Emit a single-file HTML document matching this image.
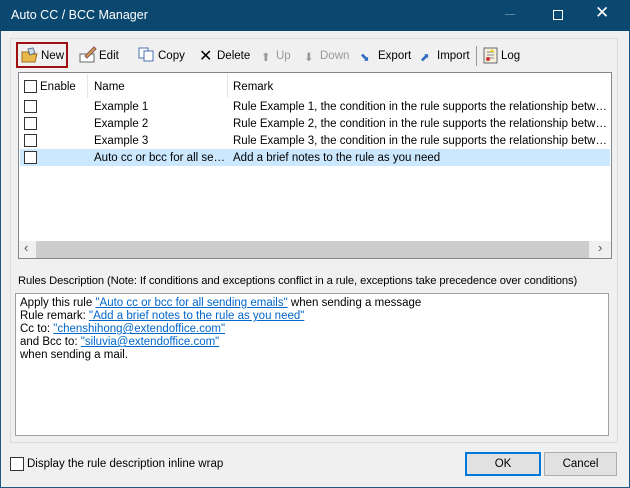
<!DOCTYPE html><html><head><style>
*{box-sizing:border-box}body{margin:0;width:630px;height:488px;overflow:hidden;background:#f0f0f0;font-family:"Liberation Sans",sans-serif;font-size:11.5px;color:#000;position:relative;white-space:nowrap}
.a{position:absolute}
a{color:#0066cc;text-decoration:underline}
.cb{position:absolute;width:13px;height:13px;border:1px solid #333;background:#fff}
.tb{position:absolute;top:50px;font-size:11.5px}
.row{position:absolute;left:20px;width:590px;height:17px;line-height:18px}
.rm{position:absolute;left:213px;width:374px;overflow:hidden;text-overflow:ellipsis}
</style></head><body>
<div class="a" style="left:0;top:0;width:630px;height:488px;border:1px solid #1c5a85;border-top:none"></div>
<div class="a" style="left:0;top:0;width:630px;height:31px;background:#0b4870;color:#fff;font-size:12.5px;line-height:31px;padding-left:11px">Auto CC / BCC Manager</div>
<div class="a" style="left:505px;top:14px;width:10px;height:1px;background:#5a86a6"></div>
<div class="a" style="left:553px;top:10px;width:10px;height:10px;border:1px solid #fff"></div>
<div class="a" style="left:595px;top:3px;color:#fff;font-size:17px">✕</div>
<div class="a" style="left:10px;top:38px;width:608px;height:405px;border:1px solid #dcdcdc;background:#f0f0f0"></div>
<div class="a" style="left:16px;top:42px;width:52px;height:26px;border:2px solid #a01010"></div>
<svg class="a" style="left:21px;top:47px" width="18" height="16"><path d="M1 5h6l1 2h8l-2 8H1z" fill="#e9b84a" stroke="#a07020"/><path d="M7 2l5-1 2 5-5 2z" fill="#cde" stroke="#678"/></svg>
<div class="tb" style="left:41px">New</div>
<svg class="a" style="left:79px;top:46px" width="18" height="17"><rect x="1" y="8" width="14" height="8" fill="#fff" stroke="#666"/><path d="M6 10L15 1l2 2-9 9z" fill="#d8a050" stroke="#855"/></svg>
<div class="tb" style="left:99px">Edit</div>
<svg class="a" style="left:138px;top:47px" width="16" height="15"><rect x="1" y="1" width="9" height="10" fill="#fff" stroke="#4a70b0"/><rect x="6" y="4" width="9" height="10" fill="#fff" stroke="#4a70b0"/></svg>
<div class="tb" style="left:158px">Copy</div>
<div class="a" style="left:199px;top:46px;font-size:16px">✕</div>
<div class="tb" style="left:217px">Delete</div>
<div class="tb" style="left:261px;color:#999">⬆</div><div class="tb" style="left:276px;color:#999">Up</div>
<div class="tb" style="left:304px;color:#999">⬇</div><div class="tb" style="left:320px;color:#999">Down</div>
<div class="tb" style="left:360px;color:#2d6cc0">⬊</div><div class="tb" style="left:378px">Export</div>
<div class="tb" style="left:420px;color:#2d6cc0">⬈</div><div class="tb" style="left:437px">Import</div>
<div class="a" style="left:476px;top:46px;width:1px;height:20px;background:#999"></div>
<svg class="a" style="left:483px;top:47px" width="16" height="17"><rect x="1" y="1" width="13" height="15" fill="#f4f0d8" stroke="#667"/><path d="M4 5h7M4 8h7M4 11h7" stroke="#889"/><circle cx="5" cy="12" r="2" fill="#c33"/><path d="M9 2l2 3H7z" fill="#ec0"/></svg>
<div class="tb" style="left:501px">Log</div>
<div class="a" style="left:18px;top:72px;width:594px;height:187px;border:1px solid #828790;background:#fff"></div>
<div class="a" style="left:87px;top:74px;width:1px;height:24px;background:#e5e5e5"></div>
<div class="a" style="left:227px;top:74px;width:1px;height:24px;background:#e5e5e5"></div>
<div class="cb" style="left:24px;top:80px"></div><div class="a" style="left:40px;top:81px">Enable</div>
<div class="a" style="left:94px;top:81px">Name</div><div class="a" style="left:233px;top:81px">Remark</div>
<div class="row" style="top:98px"><div class="cb" style="left:4px;top:2px"></div><span class="a" style="left:74px">Example 1</span><span class="rm">Rule Example 1, the condition in the rule supports the relationship between the conditions</span></div>
<div class="row" style="top:115px"><div class="cb" style="left:4px;top:2px"></div><span class="a" style="left:74px">Example 2</span><span class="rm">Rule Example 2, the condition in the rule supports the relationship between the conditions</span></div>
<div class="row" style="top:132px"><div class="cb" style="left:4px;top:2px"></div><span class="a" style="left:74px">Example 3</span><span class="rm">Rule Example 3, the condition in the rule supports the relationship between the conditions</span></div>
<div class="row" style="top:149px;background:#cce8ff"><div class="cb" style="left:4px;top:2px"></div><span class="a" style="left:74px;width:132px;overflow:hidden;text-overflow:ellipsis">Auto cc or bcc for all sending emails</span><span class="rm">Add a brief notes to the rule as you need</span></div>
<div class="a" style="left:19px;top:241px;width:592px;height:17px;background:#f0f0f0"></div>
<div class="a" style="left:36px;top:241px;width:553px;height:17px;background:#cdcdcd"></div>
<div class="a" style="left:24px;top:240px;color:#555;font-size:13px">‹</div>
<div class="a" style="left:598px;top:240px;color:#555;font-size:13px">›</div>
<div class="a" style="left:18px;top:275px;font-size:11.2px;letter-spacing:-0.1px">Rules Description (Note: If conditions and exceptions conflict in a rule, exceptions take precedence over conditions)</div>
<div class="a" style="left:15px;top:293px;width:594px;height:143px;border:1px solid #a0a0a0;background:#fff;padding:3px 4px;line-height:13px">
Apply this rule <a>"Auto cc or bcc for all sending emails"</a> when sending a message<br>Rule remark: <a>"Add a brief notes to the rule as you need"</a><br>Cc to: <a>"chenshihong@extendoffice.com"</a><br>and Bcc to: <a>"siluvia@extendoffice.com"</a><br>when sending a mail.</div>
<div class="cb" style="left:10px;top:457px;width:14px;height:14px"></div>
<div class="a" style="left:27px;top:458px">Display the rule description inline wrap</div>
<div class="a" style="left:465px;top:452px;width:76px;height:24px;border:2px solid #0078d7;background:#e1e1e1;text-align:center;line-height:20px">OK</div>
<div class="a" style="left:544px;top:452px;width:73px;height:24px;border:1px solid #adadad;background:#e1e1e1;text-align:center;line-height:22px">Cancel</div>
</body></html>
